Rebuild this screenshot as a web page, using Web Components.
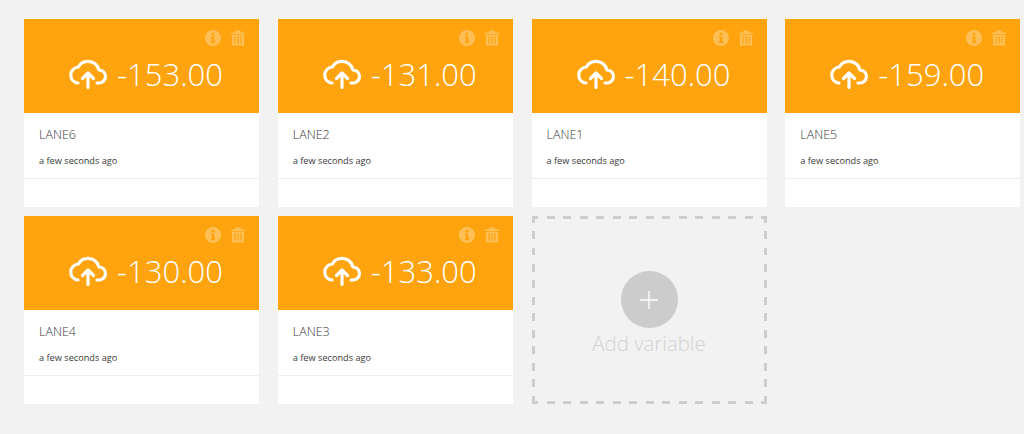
<!DOCTYPE html>
<html>
<head>
<meta charset="utf-8">
<title>Variables</title>
<style>
html, body { margin: 0; background: #f2f2f2; }
</style>
</head>
<body>
<variable-board>
	<variable-card name="LANE6" value="-153.00"></variable-card>
	<variable-card name="LANE2" value="-131.00"></variable-card>
	<variable-card name="LANE1" value="-140.00"></variable-card>
	<variable-card name="LANE5" value="-159.00"></variable-card>
	<variable-card name="LANE4" value="-130.00"></variable-card>
	<variable-card name="LANE3" value="-133.00"></variable-card>
	<add-variable-card>Add variable</add-variable-card>
</variable-board>

<template id="board-template">
<style>
:host {
	display: grid;
	grid-template-columns: repeat(4, 234.75px);
	grid-auto-rows: 188px;
	gap: 9px 19px;
	padding: 19px 0 0 24px;
	height: 415px;
	box-sizing: border-box;
	font-family: "Open Sans", "Liberation Sans", sans-serif;
}
</style>
<slot></slot>
</template>

<template id="card-template">
<style>
:host {
	display: flex;
	flex-direction: column;
	width: 235px;
	background: #fff;
	color: #3a3a3a;
}
.head {
	display: flex;
	flex-direction: column;
	height: 94px;
	box-sizing: border-box;
	padding: 10px 14px 0 0;
	background: #ffa40e;
	color: #fff;
}
.actions {
	display: flex;
	justify-content: flex-end;
	align-items: center;
	gap: 10px;
	height: 18px;
}
.actions svg { display: block; opacity: .3; }
.reading {
	display: flex;
	justify-content: center;
	align-items: center;
	gap: 9px;
	margin: 6px -14px 0 9px;
	height: 42px;
}
.value {
	font-size: 31px;
	font-weight: 300;
	line-height: 42px;
}
.info {
	height: 66px;
	box-sizing: border-box;
	padding: 13px 15px 0;
	border-bottom: 1px solid #eee;
}
.name {
	font-size: 12.500px;
	font-weight: 300;
	line-height: 17px;
}
.time {
	margin-top: 11px;
	font-size: 9.200px;
	line-height: 13px;
}
</style>
<div class="head">
	<div class="actions">
		<svg width="16" height="16" viewBox="0 0 16 16" fill="#fff"><path fill-rule="evenodd" d="M8 0a8 8 0 1 0 0 16A8 8 0 0 0 8 0zM6.600 2.800h2.800v2.400H6.600zM5.800 6.400h3.600v5h1v1.800H5.800v-1.800h1V8.200h-1z"/></svg>
		<svg width="14" height="16" viewBox="0 0 15 16" fill="#fff"><path fill-rule="evenodd" d="M5 0h5l1 2h4v1.600H0V2h4zM1 4.600h13V16H1zM3.600 6.200v8h1.300v-8zM6.900 6.200v8h1.300v-8zM10.100 6.200v8h1.300v-8z"/></svg>
	</div>
	<div class="reading">
		<svg width="39" height="31" viewBox="0 0 39 31" fill="none" stroke="#fff" stroke-width="3.200" stroke-linecap="round" stroke-linejoin="round"><path d="M9 24C4.800 23.600 1.800 20.300 1.800 16 1.800 11.700 5 8.300 9.300 8 11 4.600 14.800 2.300 19 2.300c5.500 0 9.800 3.600 10.800 8.500 3.800.3 6.700 3.200 6.700 6.800 0 3.600-3 6.400-6.500 6.400h-2"/><path d="M19 28.500V14M13.500 19.500L19 14l5.500 5.500"/></svg>
		<span class="value"></span>
	</div>
</div>
<div class="info">
	<div class="name"></div>
	<div class="time">a few seconds ago</div>
</div>
</template>

<template id="add-template">
<style>
:host {
	--dash: #cdcdcd;
	--dashes-x: repeating-linear-gradient(90deg, var(--dash) 0 6.500px, transparent 6.500px 15px, var(--dash) 15px 16.500px);
	--dashes-y: repeating-linear-gradient(180deg, var(--dash) 0 6.500px, transparent 6.500px 15px, var(--dash) 15px 16.500px);
	display: flex;
	flex-direction: column;
	align-items: center;
	width: 235px;
	box-sizing: border-box;
	padding-top: 55px;
	color: #d2d2d2;
	background:
		var(--dashes-x) 0 0 / 100% 3px no-repeat,
		var(--dashes-x) 0 100% / 100% 3px no-repeat,
		var(--dashes-y) 0 0 / 3px 100% no-repeat,
		var(--dashes-y) 100% 0 / 3px 100% no-repeat;
}
.circle {
	display: flex;
	justify-content: center;
	align-items: center;
	width: 57px;
	height: 57px;
	border-radius: 50%;
	background: #ccc;
}
.label {
	font-size: 20.400px;
	font-weight: 300;
	line-height: 30px;
}
</style>
<div class="circle">
	<svg width="18" height="18" viewBox="0 0 18 18" stroke="#fff" stroke-width="1.300"><path d="M9 0v18M0 9h18"/></svg>
</div>
<div class="label"><slot></slot></div>
</template>

<script>
function useTemplate(el, id) {
	el.attachShadow({ mode: 'open' });
	el.shadowRoot.appendChild(document.getElementById(id).content.cloneNode(true));
}

class VariableBoard extends HTMLElement {
	constructor() {
		super();
		useTemplate(this, 'board-template');
	}
}

class VariableCard extends HTMLElement {
	constructor() {
		super();
		useTemplate(this, 'card-template');
	}

	connectedCallback() {
		this.shadowRoot.querySelector('.name').textContent = this.getAttribute('name');
		this.shadowRoot.querySelector('.value').textContent = this.getAttribute('value');
	}
}

class AddVariableCard extends HTMLElement {
	constructor() {
		super();
		useTemplate(this, 'add-template');
	}
}

customElements.define('variable-board', VariableBoard);
customElements.define('variable-card', VariableCard);
customElements.define('add-variable-card', AddVariableCard);
</script>
</body>
</html>
